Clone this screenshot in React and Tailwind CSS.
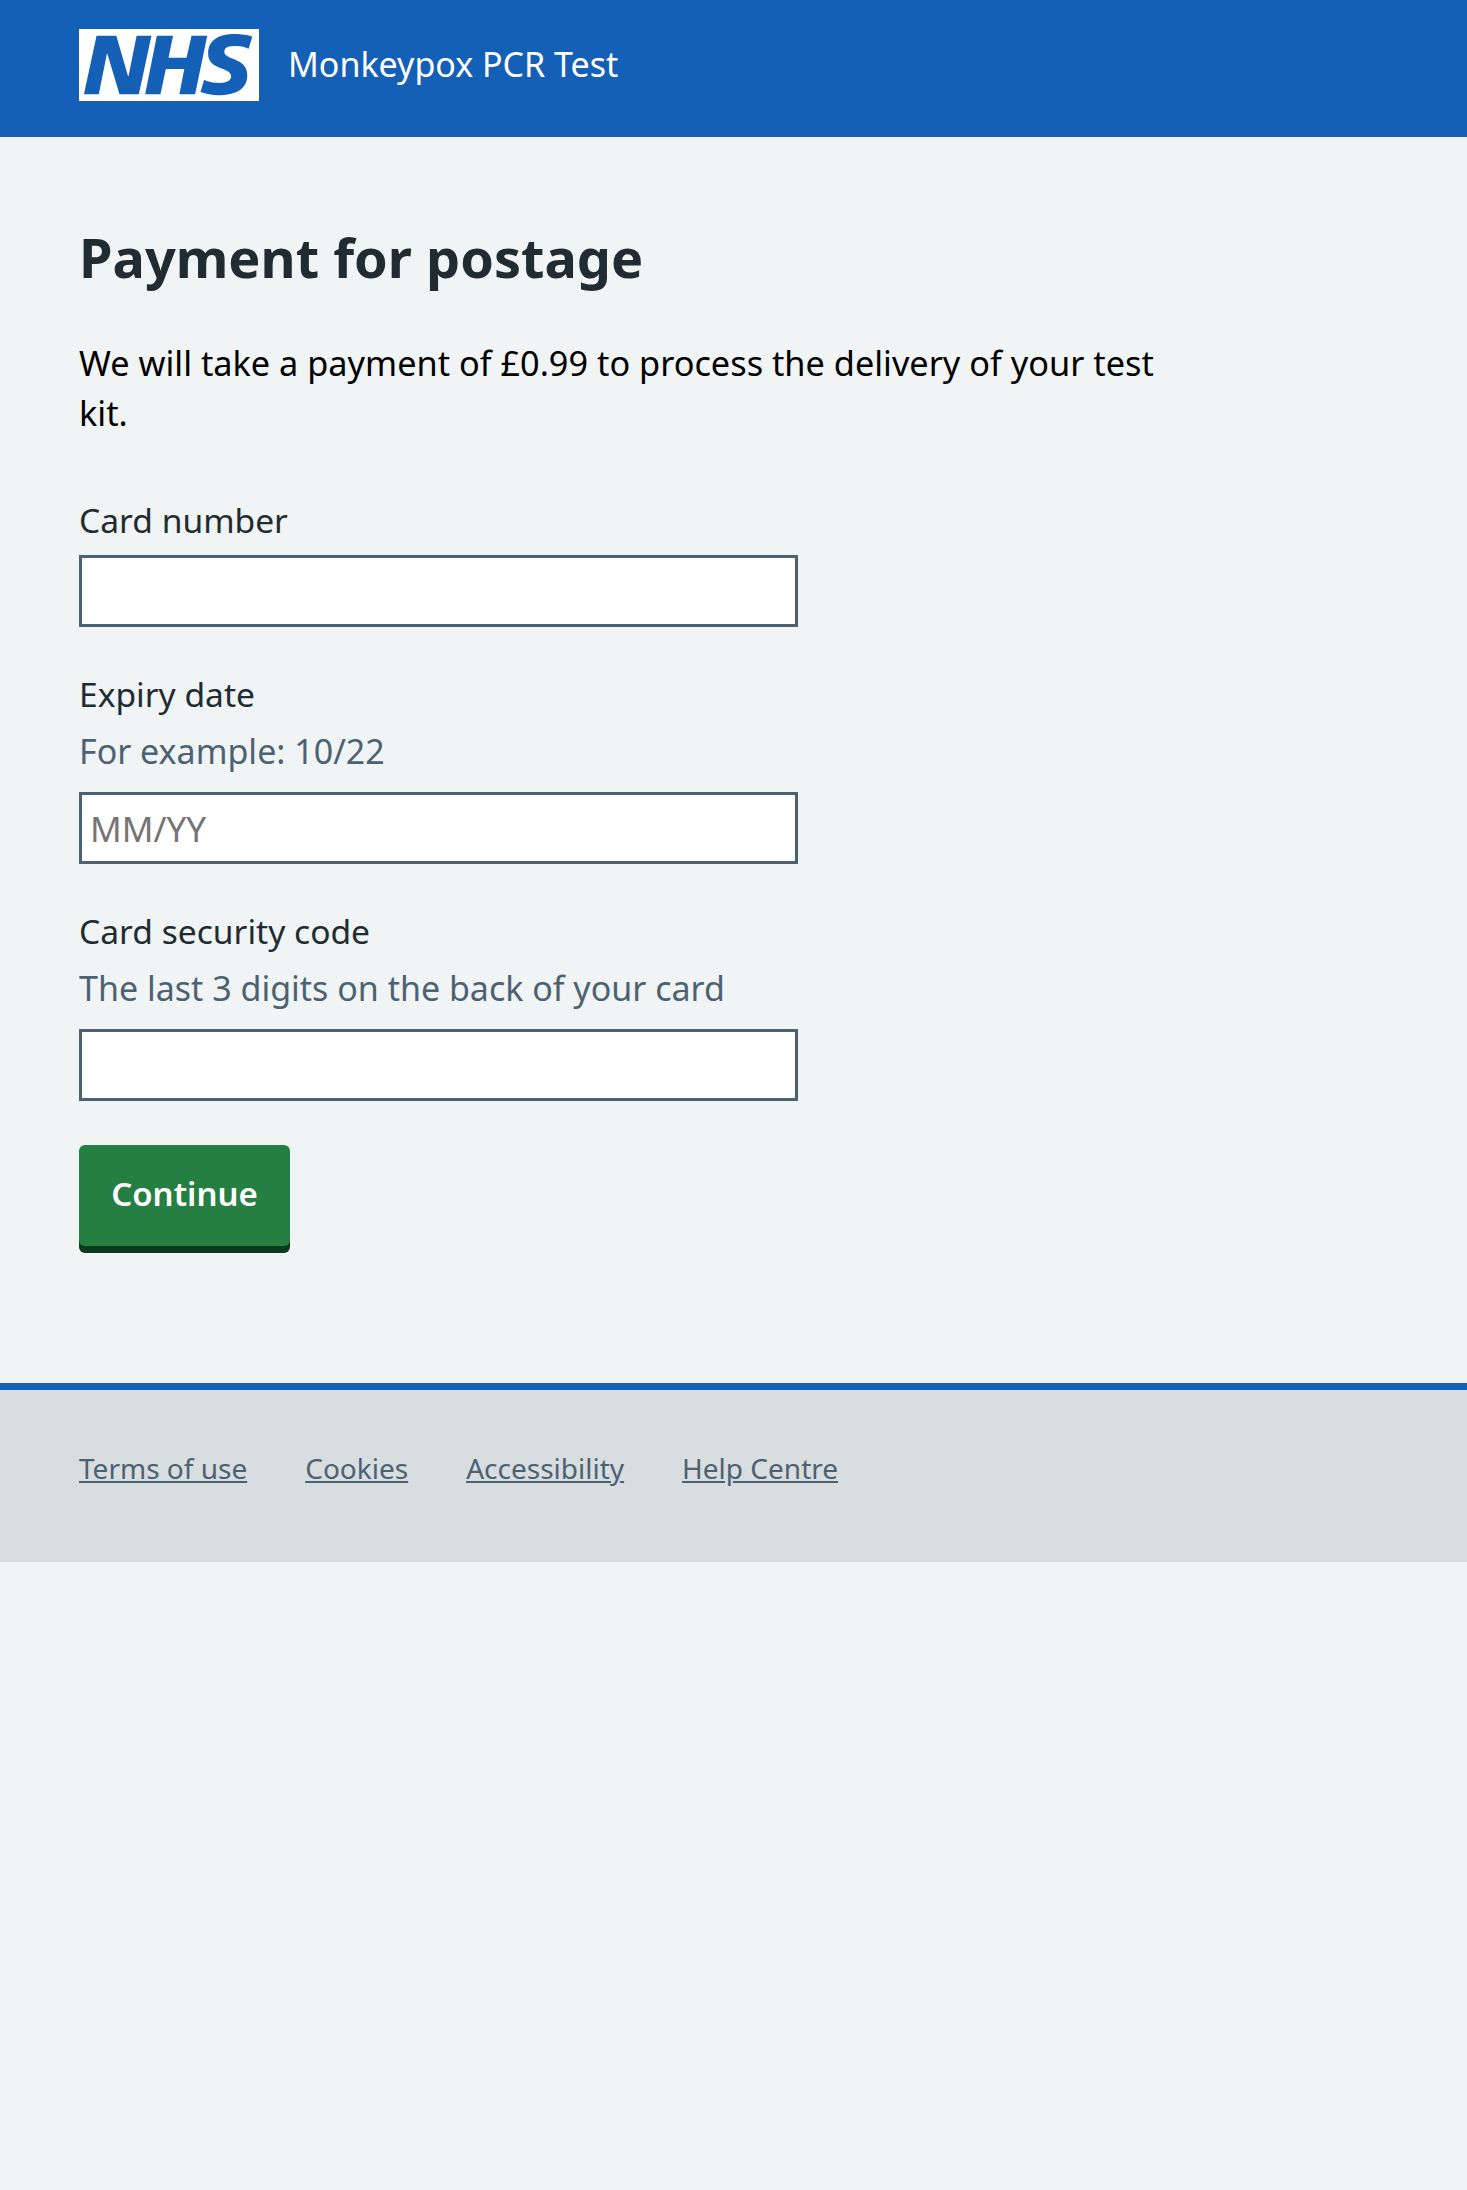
import React from "react";

const font = { fontFamily: '"Noto Sans", Arial, sans-serif' };

// NHS logo
function NhsLogo() {
  return (
    <svg viewBox="0 0 40 16" className="block w-[180px] h-[72px]" aria-label="NHS">
      <path fill="#fff" d="M0 0h40v16H0z" />
      <path
        fill="#1460b6"
        d="M3.9 1.5h4.4l2.6 9h.1l1.8-9h3.3l-2.8 13H9l-2.7-9h-.1l-1.8 9H1.1M17.3 1.5h3.6l-1 4.9h4L25 1.5h3.5l-2.7 13h-3.5l1.1-5.6h-4.1l-1.2 5.6h-3.4M37.7 4.4c-.7-.3-1.6-.6-2.9-.6-1.4 0-2.5.2-2.5 1.3 0 1.8 5.1 1.2 5.1 5.1 0 3.6-3.3 4.5-6.4 4.5-1.3 0-2.9-.3-4-.7l.8-2.7c.7.4 2.1.7 3.2.7s2.8-.2 2.8-1.5c0-2.1-5.1-1.3-5.1-5 0-3.4 2.9-4.4 5.8-4.4 1.6 0 3.1.2 4 .6"
      />
    </svg>
  );
}

function Field({ label, hint, placeholder, className }) {
  return (
    <div className={className}>
      <label className={hint ? "block text-[33.6px] leading-[50px] text-[#212b32] mb-[7px]" : "block text-[33.6px] leading-[50px] text-[#212b32] mb-[10px]"}>
        {label}
      </label>
      {hint && <div className="text-[34px] leading-[50px] text-[#4c6272] mb-[16px]">{hint}</div>}
      <input
        type="text"
        placeholder={placeholder}
        className="block w-[719px] h-[72px] px-[8px] bg-white border-[3px] border-[#4c6272] text-[35px] text-[#212b32] placeholder:text-[#757575] outline-none"
      />
    </div>
  );
}

export default function App() {
  return (
    <div className="min-h-[2190px] bg-[#f0f4f5]" style={font}>
      {/* header */}
      <header className="h-[137px] bg-[#1460b6] px-[79px] pt-[29px] flex items-start gap-[29px]">
        <NhsLogo />
        <span className="text-[34px] leading-[70px] text-white">Monkeypox PCR Test</span>
      </header>

      {/* main */}
      <main className="px-[79px] pt-[84px] pb-[130px]">
        <h1 className="text-[54px] leading-[72px] font-bold text-[#212b32] mb-[45px]">Payment for postage</h1>
        <p className="w-[1170px] text-[34.3px] leading-[50px] text-black mb-[57px]">
          We will take a payment of £0.99 to process the delivery of your test<br />kit.
        </p>
        <Field label="Card number" />
        <Field className="mt-[42px]" label="Expiry date" hint="For example: 10/22" placeholder="MM/YY" />
        <Field className="mt-[42px]" label="Card security code" hint="The last 3 digits on the back of your card" />
        <button className="mt-[44px] block w-[211px] h-[101px] pb-[3px] mb-[7px] rounded-[6px] bg-[#257e42] shadow-[0_7px_0_#0b3b1f] text-[33px] font-semibold text-white">
          Continue
        </button>
      </main>

      {/* footer */}
      <footer className="h-[179px] bg-[#d8dde0] border-t-[7px] border-[#1460b6] px-[79px] pb-[16px] flex items-center gap-[58px] text-[28px] text-[#4c6272]">
        <a href="#" className="underline">Terms of use</a>
        <a href="#" className="underline">Cookies</a>
        <a href="#" className="underline">Accessibility</a>
        <a href="#" className="underline">Help Centre</a>
      </footer>
    </div>
  );
}
